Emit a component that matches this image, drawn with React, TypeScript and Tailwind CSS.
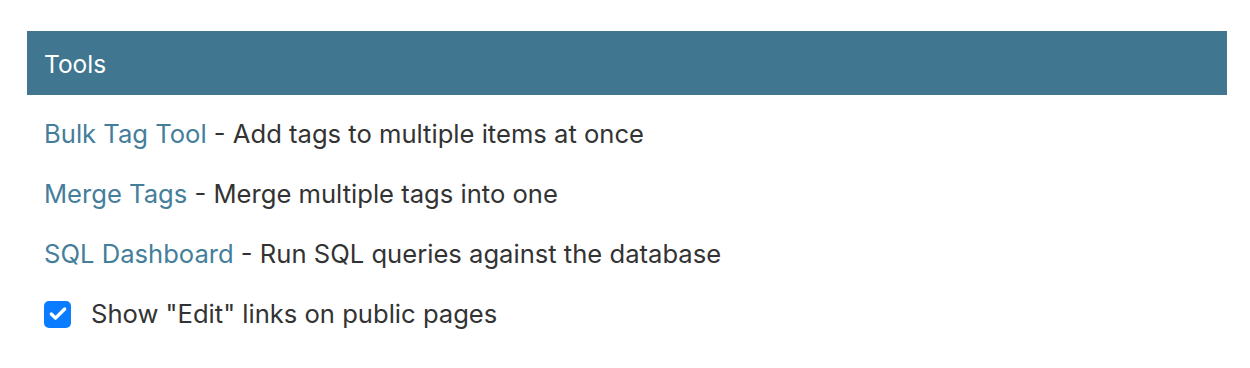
import { Check } from "lucide-react";

const tools = [
  { name: "Bulk Tag Tool", desc: "Add tags to multiple items at once" },
  { name: "Merge Tags", desc: "Merge multiple tags into one" },
  { name: "SQL Dashboard", desc: "Run SQL queries against the database" },
];

export default function App() {
  return (
    <div className="min-h-[368px] bg-white pl-[27px] pr-[23px] pt-[31px] font-['Inter',sans-serif] text-[25.6px] text-[#333]">
      <div className="flex h-[64px] items-center bg-[#417690] px-[17px] pt-[3px] text-[24.5px] text-white">Tools</div>
      <ul className="px-[17px] pt-[9px]">
        {tools.map((t) => (
          <li key={t.name} className="flex h-[60px] items-center">
            <a href="#" className="text-[#447e9b]">
              {t.name}
            </a>
            <span>&nbsp;- {t.desc}</span>
          </li>
        ))}
        <li className="flex h-[60px] items-center gap-[20px]">
          <span className="flex h-[27px] w-[27px] items-center justify-center rounded-[5px] bg-[#0a7cff]">
            <Check className="h-[20px] w-[20px] text-white" strokeWidth={4} />
          </span>
          <span>Show "Edit" links on public pages</span>
        </li>
      </ul>
    </div>
  );
}
